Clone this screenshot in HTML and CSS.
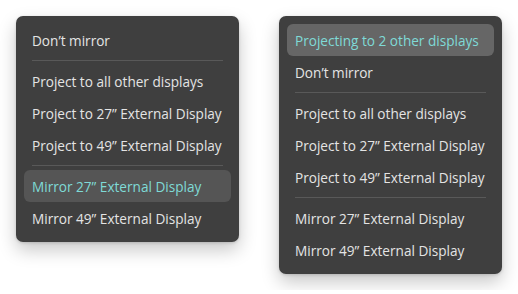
FILE: index.html
```html
<!DOCTYPE html>
<html>
<head>
<meta charset="utf-8">
<link rel="stylesheet" href="styles.css">
</head>
<body>
<div class="stage">
  <div class="menu">
    <div class="item">Don’t mirror</div>
    <div class="sep"></div>
    <div class="item">Project to all other displays</div>
    <div class="item">Project to 27” External Display</div>
    <div class="item">Project to 49” External Display</div>
    <div class="sep"></div>
    <div class="item active">Mirror 27” External Display</div>
    <div class="item">Mirror 49” External Display</div>
  </div>
  <div class="menu">
    <div class="item active strong">Projecting to 2 other displays</div>
    <div class="item">Don’t mirror</div>
    <div class="sep"></div>
    <div class="item">Project to all other displays</div>
    <div class="item">Project to 27” External Display</div>
    <div class="item">Project to 49” External Display</div>
    <div class="sep"></div>
    <div class="item">Mirror 27” External Display</div>
    <div class="item">Mirror 49” External Display</div>
  </div>
</div>
</body>
</html>
```
FILE: styles.css
```css
html, body {
  margin: 0;
  padding: 0;
  background: #ffffff;
}
.stage {
  display: flex;
  align-items: flex-start;
  gap: 40px;
  padding: 16px;
}
.menu {
  width: 223px;
  box-sizing: border-box;
  padding: 8px;
  background: #3f3f3f;
  border-radius: 7px;
  box-shadow: 0 8px 18px rgba(0, 0, 0, 0.22), 0 1px 3px rgba(0, 0, 0, 0.15);
  font-family: "Open Sans", "Noto Sans", sans-serif;
  font-size: 13.6px;
  color: #e4e4e4;
}
.item {
  height: 32px;
  line-height: 33px;
  padding: 0 8px;
  border-radius: 6px;
  white-space: nowrap;
}
.item.active {
  background: #555555;
  color: #7fdad6;
}
.item.active.strong {
  background: #666666;
}
.sep {
  height: 1px;
  margin: 4px 8px;
  background: #595959;
}
```
